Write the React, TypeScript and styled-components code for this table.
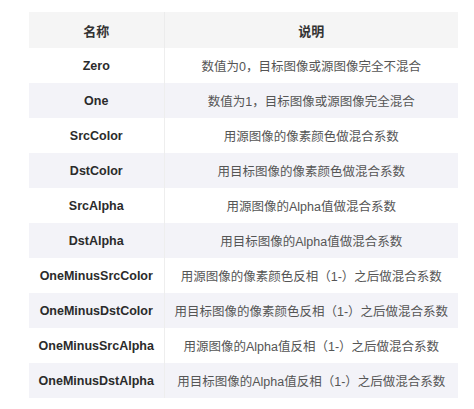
import styled, { createGlobalStyle } from "styled-components";

const GlobalStyle = createGlobalStyle`
  html, body {
    margin: 0;
    padding: 0;
    background: #ffffff;
  }
  body {
    font-family: "Liberation Sans", Arial, "Noto Sans CJK SC", sans-serif;
  }
`;

const Page = styled.div`
  width: 474px;
  height: 409px;
  padding: 12px 16px 0 29px;
  box-sizing: border-box;
`;

const Table = styled.table`
  width: 429px;
  border-collapse: collapse;
  table-layout: fixed;
  font-size: 12.5px;
`;

const HeadCell = styled.th<{ $first?: boolean }>`
  height: 36px;
  padding: 0;
  background: #f5f5f5;
  color: #333333;
  font-weight: bold;
  font-size: 13px;
  text-align: center;
  border-right: ${(p) => (p.$first ? "1px solid #ececec" : "none")};
`;

const Row = styled.tr<{ $alt: boolean }>`
  background: ${(p) => (p.$alt ? "#f3f3f8" : "#ffffff")};
`;

const NameCell = styled.td`
  width: 135px;
  height: 35px;
  padding: 0;
  text-align: center;
  font-weight: bold;
  color: #2b2b2b;
  border-right: 1px solid #eeeeee;
  white-space: nowrap;
`;

const DescCell = styled.td`
  height: 35px;
  padding: 0;
  text-align: center;
  color: #555555;
  white-space: nowrap;
`;

const rows: [string, string][] = [
  ["Zero", "数值为0，目标图像或源图像完全不混合"],
  ["One", "数值为1，目标图像或源图像完全混合"],
  ["SrcColor", "用源图像的像素颜色做混合系数"],
  ["DstColor", "用目标图像的像素颜色做混合系数"],
  ["SrcAlpha", "用源图像的Alpha值做混合系数"],
  ["DstAlpha", "用目标图像的Alpha值做混合系数"],
  ["OneMinusSrcColor", "用源图像的像素颜色反相（1-）之后做混合系数"],
  ["OneMinusDstColor", "用目标图像的像素颜色反相（1-）之后做混合系数"],
  ["OneMinusSrcAlpha", "用源图像的Alpha值反相（1-）之后做混合系数"],
  ["OneMinusDstAlpha", "用目标图像的Alpha值反相（1-）之后做混合系数"],
];

export default function App() {
  return (
    <Page>
      <GlobalStyle />
      <Table>
        <colgroup>
          <col style={{ width: 135 }} />
          <col />
        </colgroup>
        <thead>
          <tr>
            <HeadCell $first>名称</HeadCell>
            <HeadCell>说明</HeadCell>
          </tr>
        </thead>
        <tbody>
          {rows.map(([name, desc], i) => (
            <Row key={name} $alt={i % 2 === 1}>
              <NameCell>{name}</NameCell>
              <DescCell>{desc}</DescCell>
            </Row>
          ))}
        </tbody>
      </Table>
    </Page>
  );
}
